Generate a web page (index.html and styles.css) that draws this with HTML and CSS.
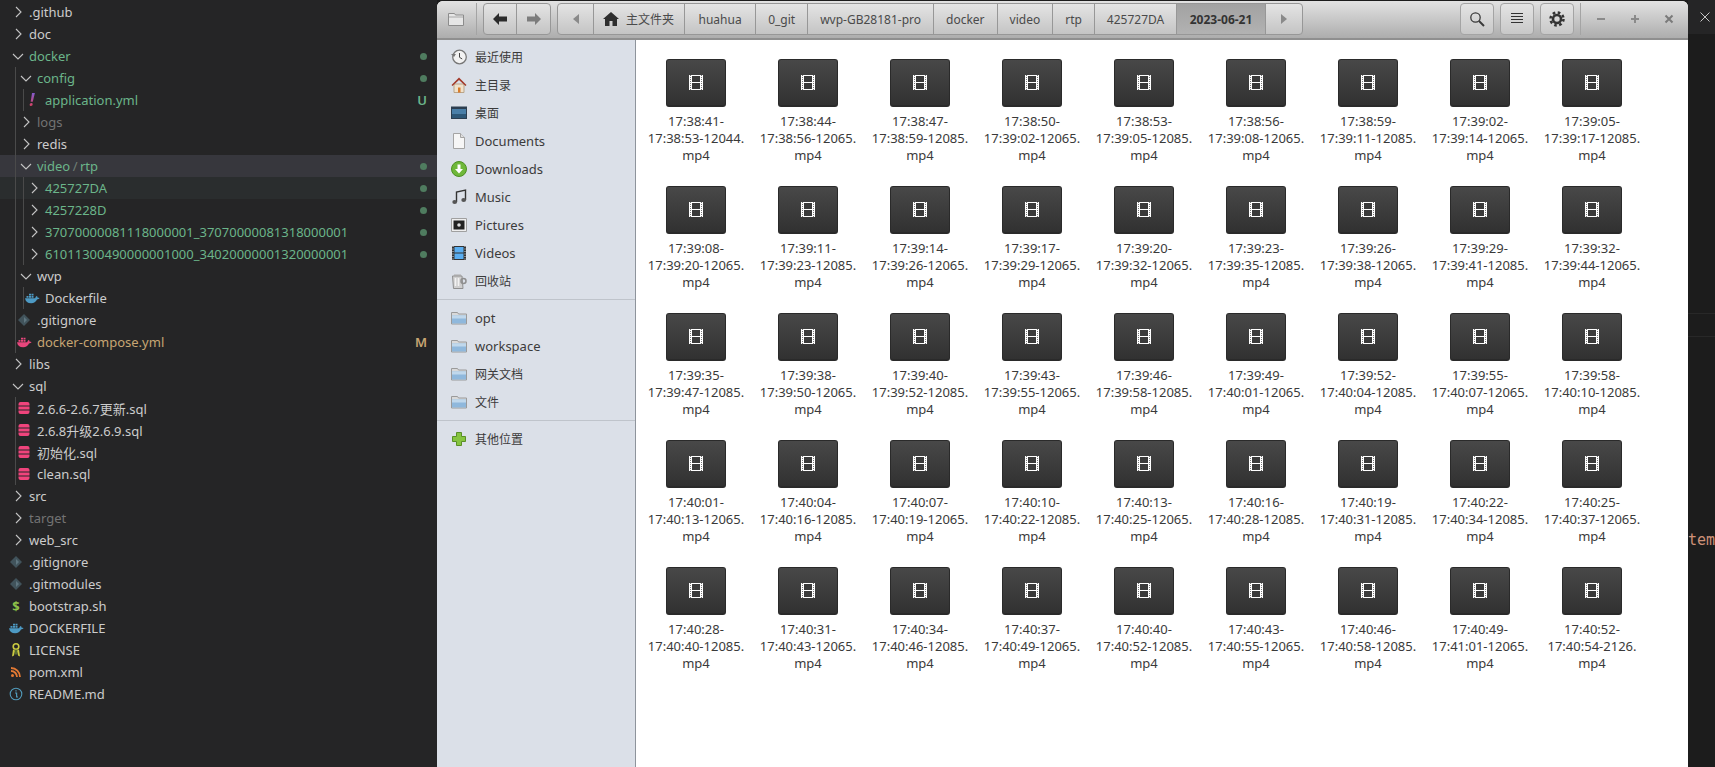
FILE: index.html
```html
<!DOCTYPE html>
<html>
    <head>
        <meta http-equiv="content-type" content="text/html;charset=utf-8">
        <title>文件管理器</title>
        <link rel="stylesheet" href="styles.css">
    </head>
    <body>
        <!-- 图标 -->
        <svg class="defs">
            <symbol id="right" viewBox="0 0 16 16"><path d="M6 3l5 5-5 5" fill="none" stroke="#c5c5c5" stroke-width="1.1"/></symbol>
            <symbol id="down" viewBox="0 0 16 16"><path d="M3 6l5 5 5-5" fill="none" stroke="#c5c5c5" stroke-width="1.1"/></symbol>
            <symbol id="whale" viewBox="0 0 16 16"><path d="M1 8.2h10.2c.2-1 .9-1.8 1.7-2.1.4.5.7 1 .8 1.6.5-.1 1.2 0 1.8.4-.5 1-1.5 1.4-2.5 1.4-1 2.4-3.2 3.7-5.8 3.7C3.600 13.200 1.600 11.400 1 8.200z"/><path d="M2.500 6h2v1.700h-2zM5 6h2v1.700H5zM7.500 6h2v1.700h-2zM5 3.800h2v1.700H5zM7.500 3.800h2v1.700h-2z"/></symbol>
            <symbol id="git" viewBox="0 0 16 16"><path d="M8 2l6 6-6 6-6-6z" fill="#41535b"/><path d="M8 5l3 3-3 3z" fill="#5f7680"/></symbol>
            <symbol id="db" viewBox="0 0 16 16"><path d="M4.500 2h7a2 2 0 0 1 2 2v1.500h-11V4a2 2 0 0 1 2-2zM2.500 6.500h11v3h-11zM2.500 10.500h11V12a2 2 0 0 1-2 2h-7a2 2 0 0 1-2-2z" fill="#f0447c"/></symbol>
            <symbol id="key" viewBox="0 0 16 16"><circle cx="8" cy="4.500" r="2.800" fill="none" stroke="#cbcb41" stroke-width="1.600"/><path d="M5 7.500l-1 7 2-1 1-5zM11 7.500l1 7-2-1-1-5z" fill="#cbcb41"/><path d="M7.300 7.500h1.400v5H7.300z" fill="#6d8f3a"/></symbol>
            <symbol id="rss" viewBox="0 0 16 16"><circle cx="4.500" cy="11.500" r="1.500" fill="#e37933"/><path d="M3 7a6 6 0 0 1 6 6M3 4a9 9 0 0 1 9 9" fill="none" stroke="#e37933" stroke-width="1.800"/></symbol>
            <symbol id="info" viewBox="0 0 16 16"><circle cx="8" cy="8" r="5.800" fill="none" stroke="#519aba" stroke-width="1.100"/><path d="M7 7h1.600v4H10M8 4.300v1.200" fill="none" stroke="#519aba" stroke-width="1.200"/></symbol>
            <symbol id="film" viewBox="0 0 14 15"><path d="M0 0h14v15H0z" fill="#fff"/><path d="M3 1h8v6H3zM3 8h8v6H3z" fill="#3a3a3a"/><path d="M1.500 0v15M12.500 0v15" stroke="#777" stroke-dasharray="1 1"/></symbol>
            <symbol id="folder" viewBox="0 0 16 16"><path d="M.5 2.500h6l1 1.500h8v10H.500z" fill="#d9d9d9" stroke="#9a9a9a"/><path d="M1 5.500h14V13.500H1z" fill="#8fb8dc"/><path d="M1 5.500h14v3H1z" fill="#c0d8ec"/></symbol>
        </svg>

        <!-- 左边文件树 -->
        <div class="explorer">
            <div class="row"><svg class="tw"><use href="#right"/></svg><span>.github</span></div>
            <div class="row"><svg class="tw"><use href="#right"/></svg><span>doc</span></div>
            <div class="row green"><svg class="tw"><use href="#down"/></svg><span>docker</span><b class="dot"></b></div>
            <div class="row green"><i class="guide"></i><svg class="tw"><use href="#down"/></svg><span>config</span><b class="dot"></b></div>
            <div class="row green"><i class="guide"></i><i class="guide"></i><span class="ico bang">!</span><span>application.yml</span><b class="mark">U</b></div>
            <div class="row faded"><i class="guide"></i><svg class="tw"><use href="#right"/></svg><span>logs</span></div>
            <div class="row"><i class="guide"></i><svg class="tw"><use href="#right"/></svg><span>redis</span></div>
            <div class="row green selected"><i class="guide"></i><svg class="tw"><use href="#down"/></svg><span>video<em class="slash">/</em>rtp</span><b class="dot"></b></div>
            <div class="row green hover"><i class="guide"></i><i class="guide"></i><svg class="tw"><use href="#right"/></svg><span>425727DA</span><b class="dot"></b></div>
            <div class="row green"><i class="guide"></i><i class="guide"></i><svg class="tw"><use href="#right"/></svg><span>4257228D</span><b class="dot"></b></div>
            <div class="row green"><i class="guide"></i><i class="guide"></i><svg class="tw"><use href="#right"/></svg><span>37070000081118000001_37070000081318000001</span><b class="dot"></b></div>
            <div class="row green"><i class="guide"></i><i class="guide"></i><svg class="tw"><use href="#right"/></svg><span>61011300490000001000_34020000001320000001</span><b class="dot"></b></div>
            <div class="row"><i class="guide"></i><svg class="tw"><use href="#down"/></svg><span>wvp</span></div>
            <div class="row"><i class="guide"></i><i class="guide"></i><svg class="ico blue"><use href="#whale"/></svg><span>Dockerfile</span></div>
            <div class="row"><i class="guide"></i><svg class="ico"><use href="#git"/></svg><span>.gitignore</span></div>
            <div class="row yellow"><i class="guide"></i><svg class="ico pink"><use href="#whale"/></svg><span>docker-compose.yml</span><b class="mark">M</b></div>
            <div class="row"><svg class="tw"><use href="#right"/></svg><span>libs</span></div>
            <div class="row"><svg class="tw"><use href="#down"/></svg><span>sql</span></div>
            <div class="row"><i class="guide"></i><svg class="ico"><use href="#db"/></svg><span>2.6.6-2.6.7更新.sql</span></div>
            <div class="row"><i class="guide"></i><svg class="ico"><use href="#db"/></svg><span>2.6.8升级2.6.9.sql</span></div>
            <div class="row"><i class="guide"></i><svg class="ico"><use href="#db"/></svg><span>初始化.sql</span></div>
            <div class="row"><i class="guide"></i><svg class="ico"><use href="#db"/></svg><span>clean.sql</span></div>
            <div class="row"><svg class="tw"><use href="#right"/></svg><span>src</span></div>
            <div class="row faded"><svg class="tw"><use href="#right"/></svg><span>target</span></div>
            <div class="row"><svg class="tw"><use href="#right"/></svg><span>web_src</span></div>
            <div class="row"><svg class="ico"><use href="#git"/></svg><span>.gitignore</span></div>
            <div class="row"><svg class="ico"><use href="#git"/></svg><span>.gitmodules</span></div>
            <div class="row"><span class="ico dollar">$</span><span>bootstrap.sh</span></div>
            <div class="row"><svg class="ico blue"><use href="#whale"/></svg><span>DOCKERFILE</span></div>
            <div class="row"><svg class="ico"><use href="#key"/></svg><span>LICENSE</span></div>
            <div class="row"><svg class="ico"><use href="#rss"/></svg><span>pom.xml</span></div>
            <div class="row"><svg class="ico"><use href="#info"/></svg><span>README.md</span></div>
        </div>

        <!-- 文件管理器窗口 -->
        <div class="window">
            <div class="titlebar">
                <svg class="tb-folder" viewBox="0 0 16 16"><path d="M.5 2.500h6l1 1.500h8v10.500H.500z" fill="#e6e6e6" stroke="#8c8c8c"/><path d="M1 6h14" stroke="#a8a8a8"/></svg>
                <i class="tb-sep"></i>
                <div class="btn-group">
                    <div class="crumb nav"><svg width="14" height="12" viewBox="0 0 14 12"><path d="M0 6l6-6v3.500h8v5H6V12z" fill="#2b2b2b"/></svg></div>
                    <div class="crumb nav"><svg width="14" height="12" viewBox="0 0 14 12"><path d="M14 6L8 0v3.500H0v5h8V12z" fill="#7c7c7c"/></svg></div>
                </div>
                <div class="btn-group path">
                    <div class="crumb arrow"><svg width="6" height="10" viewBox="0 0 6 10"><path d="M6 0v10L0 5z" fill="#8a8a8a"/></svg></div>
                    <div class="crumb home"><svg width="16" height="14" viewBox="0 0 16 14"><path d="M8 0l8 7h-2v7H9.500V9h-3v5H2V7H0z" fill="#2e2e2e"/></svg><span class="cjk">主文件夹</span></div>
                    <div class="crumb wide">huahua</div>
                    <div class="crumb">0_git</div>
                    <div class="crumb">wvp-GB28181-pro</div>
                    <div class="crumb">docker</div>
                    <div class="crumb">video</div>
                    <div class="crumb">rtp</div>
                    <div class="crumb">425727DA</div>
                    <div class="crumb active">2023-06-21</div>
                    <div class="crumb arrow end"><svg width="6" height="10" viewBox="0 0 6 10"><path d="M0 0v10l6-5z" fill="#8a8a8a"/></svg></div>
                </div>
                <div class="tb-right">
                    <div class="tool"><svg width="16" height="16" viewBox="0 0 16 16"><circle cx="6.500" cy="6.500" r="4.700" fill="none" stroke="#3a3a3a" stroke-width="1.300"/><path d="M10 10l5 5" stroke="#3a3a3a" stroke-width="2"/></svg></div>
                    <div class="tool"><svg width="14" height="12" viewBox="0 0 14 12"><path d="M1 .5h12M1 3.500h12M1 6.500h12M1 9.500h12" stroke="#333"/></svg></div>
                    <div class="tool"><svg width="16" height="16" viewBox="0 0 16 16"><circle cx="8" cy="8" r="4" fill="none" stroke="#333" stroke-width="2.600"/><circle cx="8" cy="8" r="6.500" fill="none" stroke="#333" stroke-width="2.500" stroke-dasharray="2.600 2.500"/></svg></div>
                    <i class="tb-sep wide"></i>
                    <div class="win-btn"><svg width="10" height="10" viewBox="0 0 10 10"><path d="M1 5h8" stroke="#8a8a8a" stroke-width="2"/></svg></div>
                    <div class="win-btn"><svg width="10" height="10" viewBox="0 0 10 10"><path d="M1 5h8M5 1v8" stroke="#8a8a8a" stroke-width="2"/></svg></div>
                    <div class="win-btn"><svg width="10" height="10" viewBox="0 0 10 10"><path d="M1.500 1.500l7 7M8.500 1.500l-7 7" stroke="#7a7a7a" stroke-width="2"/></svg></div>
                </div>
            </div>
            <div class="content">
                <div class="sidebar">
                    <div class="place"><svg viewBox="0 0 16 16"><circle cx="8.500" cy="8" r="6.800" fill="#f2f2f2" stroke="#777" stroke-width="1.300"/><path d="M8.500 4v4.300l2.700 1.700" fill="none" stroke="#444"/><path d="M0 5l3 3 2-3z" fill="#777"/></svg><span class="cjk">最近使用</span></div>
                    <div class="place"><svg viewBox="0 0 16 16"><path d="M3 7h10v8.500H3z" fill="#f0e2cc" stroke="#b9a58a"/><path d="M7 10.500h2.500v5H7z" fill="#d97b2a"/><path d="M8 .5L.5 8l1 1L8 3l6.500 6 1-1z" fill="#a33a2a"/></svg><span class="cjk">主目录</span></div>
                    <div class="place"><svg viewBox="0 0 16 16"><path d="M0 1.500h16v12.500H0z" fill="#2c3e50"/><path d="M1 4h14v9H1z" fill="#4a7fa8"/><path d="M1 9h14v4H1z" fill="#2e5878"/></svg><span class="cjk">桌面</span></div>
                    <div class="place"><svg viewBox="0 0 16 16"><path d="M2.500.5h7l4 4v11h-11z" fill="#f6f6f6" stroke="#a4a4a4"/><path d="M9.500.5v4h4" fill="#e0e0e0" stroke="#a4a4a4"/></svg><span>Documents</span></div>
                    <div class="place"><svg viewBox="0 0 16 16"><circle cx="8" cy="8" r="7.500" fill="#6fb83a" stroke="#4d8f22"/><path d="M6.500 3.500h3V8H12l-4 4.500L4 8h2.500z" fill="#fff"/></svg><span>Downloads</span></div>
                    <div class="place"><svg viewBox="0 0 16 16"><path d="M5.500 13V3l9-2v10" fill="none" stroke="#333" stroke-width="1.400"/><ellipse cx="3.700" cy="13" rx="2.400" ry="1.900" fill="#555"/><ellipse cx="12.700" cy="11" rx="2.400" ry="1.900" fill="#555"/></svg><span>Music</span></div>
                    <div class="place"><svg viewBox="0 0 16 16"><path d="M.5 1.500h15v13H.500z" fill="#eee" stroke="#a0a0a0"/><path d="M2.500 3.500h11v9h-11z" fill="#222"/><circle cx="8" cy="8" r="1.800" fill="#ddd"/></svg><span>Pictures</span></div>
                    <div class="place"><svg viewBox="0 0 16 16"><path d="M1 1h14v14H1z" fill="#333"/><path d="M3.500 2h9v5.500h-9zM3.500 8.500h9V14h-9z" fill="#5aaef0"/><path d="M2 1v14M14 1v14" stroke="#ddd" stroke-dasharray="1 1.500"/></svg><span>Videos</span></div>
                    <div class="place"><svg viewBox="0 0 16 16"><path d="M1.500 3h9.500l1 12.500H2.500z" fill="#cfcfcf" stroke="#8f8f8f"/><path d="M4.500 5v8M7.500 5v8" stroke="#f2f2f2" stroke-width="1.500"/><circle cx="12.500" cy="8" r="2.500" fill="none" stroke="#8f8f8f" stroke-width="1.500"/><path d="M3 1.500h7v1.500H3z" fill="#aaa"/></svg><span class="cjk">回收站</span></div>
                    <div class="side-sep"></div>
                    <div class="place"><svg><use href="#folder"/></svg><span>opt</span></div>
                    <div class="place"><svg><use href="#folder"/></svg><span>workspace</span></div>
                    <div class="place"><svg><use href="#folder"/></svg><span class="cjk">网关文档</span></div>
                    <div class="place"><svg><use href="#folder"/></svg><span class="cjk">文件</span></div>
                    <div class="side-sep"></div>
                    <div class="place"><svg viewBox="0 0 16 16"><path d="M5.500 1.500h5v4h4v5h-4v4h-5v-4h-4v-5h4z" fill="#86c440" stroke="#5a8f26"/></svg><span class="cjk">其他位置</span></div>
                </div>
                <div class="grid">
                    <div class="item"><div class="thumb"><svg><use href="#film"/></svg></div><p>17:38:41-<br>17:38:53-12044.<br>mp4</p></div>
                    <div class="item"><div class="thumb"><svg><use href="#film"/></svg></div><p>17:38:44-<br>17:38:56-12065.<br>mp4</p></div>
                    <div class="item"><div class="thumb"><svg><use href="#film"/></svg></div><p>17:38:47-<br>17:38:59-12085.<br>mp4</p></div>
                    <div class="item"><div class="thumb"><svg><use href="#film"/></svg></div><p>17:38:50-<br>17:39:02-12065.<br>mp4</p></div>
                    <div class="item"><div class="thumb"><svg><use href="#film"/></svg></div><p>17:38:53-<br>17:39:05-12085.<br>mp4</p></div>
                    <div class="item"><div class="thumb"><svg><use href="#film"/></svg></div><p>17:38:56-<br>17:39:08-12065.<br>mp4</p></div>
                    <div class="item"><div class="thumb"><svg><use href="#film"/></svg></div><p>17:38:59-<br>17:39:11-12085.<br>mp4</p></div>
                    <div class="item"><div class="thumb"><svg><use href="#film"/></svg></div><p>17:39:02-<br>17:39:14-12065.<br>mp4</p></div>
                    <div class="item"><div class="thumb"><svg><use href="#film"/></svg></div><p>17:39:05-<br>17:39:17-12085.<br>mp4</p></div>

                    <div class="item"><div class="thumb"><svg><use href="#film"/></svg></div><p>17:39:08-<br>17:39:20-12065.<br>mp4</p></div>
                    <div class="item"><div class="thumb"><svg><use href="#film"/></svg></div><p>17:39:11-<br>17:39:23-12085.<br>mp4</p></div>
                    <div class="item"><div class="thumb"><svg><use href="#film"/></svg></div><p>17:39:14-<br>17:39:26-12065.<br>mp4</p></div>
                    <div class="item"><div class="thumb"><svg><use href="#film"/></svg></div><p>17:39:17-<br>17:39:29-12065.<br>mp4</p></div>
                    <div class="item"><div class="thumb"><svg><use href="#film"/></svg></div><p>17:39:20-<br>17:39:32-12065.<br>mp4</p></div>
                    <div class="item"><div class="thumb"><svg><use href="#film"/></svg></div><p>17:39:23-<br>17:39:35-12085.<br>mp4</p></div>
                    <div class="item"><div class="thumb"><svg><use href="#film"/></svg></div><p>17:39:26-<br>17:39:38-12065.<br>mp4</p></div>
                    <div class="item"><div class="thumb"><svg><use href="#film"/></svg></div><p>17:39:29-<br>17:39:41-12085.<br>mp4</p></div>
                    <div class="item"><div class="thumb"><svg><use href="#film"/></svg></div><p>17:39:32-<br>17:39:44-12065.<br>mp4</p></div>

                    <div class="item"><div class="thumb"><svg><use href="#film"/></svg></div><p>17:39:35-<br>17:39:47-12085.<br>mp4</p></div>
                    <div class="item"><div class="thumb"><svg><use href="#film"/></svg></div><p>17:39:38-<br>17:39:50-12065.<br>mp4</p></div>
                    <div class="item"><div class="thumb"><svg><use href="#film"/></svg></div><p>17:39:40-<br>17:39:52-12085.<br>mp4</p></div>
                    <div class="item"><div class="thumb"><svg><use href="#film"/></svg></div><p>17:39:43-<br>17:39:55-12065.<br>mp4</p></div>
                    <div class="item"><div class="thumb"><svg><use href="#film"/></svg></div><p>17:39:46-<br>17:39:58-12085.<br>mp4</p></div>
                    <div class="item"><div class="thumb"><svg><use href="#film"/></svg></div><p>17:39:49-<br>17:40:01-12065.<br>mp4</p></div>
                    <div class="item"><div class="thumb"><svg><use href="#film"/></svg></div><p>17:39:52-<br>17:40:04-12085.<br>mp4</p></div>
                    <div class="item"><div class="thumb"><svg><use href="#film"/></svg></div><p>17:39:55-<br>17:40:07-12065.<br>mp4</p></div>
                    <div class="item"><div class="thumb"><svg><use href="#film"/></svg></div><p>17:39:58-<br>17:40:10-12085.<br>mp4</p></div>

                    <div class="item"><div class="thumb"><svg><use href="#film"/></svg></div><p>17:40:01-<br>17:40:13-12065.<br>mp4</p></div>
                    <div class="item"><div class="thumb"><svg><use href="#film"/></svg></div><p>17:40:04-<br>17:40:16-12085.<br>mp4</p></div>
                    <div class="item"><div class="thumb"><svg><use href="#film"/></svg></div><p>17:40:07-<br>17:40:19-12065.<br>mp4</p></div>
                    <div class="item"><div class="thumb"><svg><use href="#film"/></svg></div><p>17:40:10-<br>17:40:22-12085.<br>mp4</p></div>
                    <div class="item"><div class="thumb"><svg><use href="#film"/></svg></div><p>17:40:13-<br>17:40:25-12065.<br>mp4</p></div>
                    <div class="item"><div class="thumb"><svg><use href="#film"/></svg></div><p>17:40:16-<br>17:40:28-12085.<br>mp4</p></div>
                    <div class="item"><div class="thumb"><svg><use href="#film"/></svg></div><p>17:40:19-<br>17:40:31-12085.<br>mp4</p></div>
                    <div class="item"><div class="thumb"><svg><use href="#film"/></svg></div><p>17:40:22-<br>17:40:34-12085.<br>mp4</p></div>
                    <div class="item"><div class="thumb"><svg><use href="#film"/></svg></div><p>17:40:25-<br>17:40:37-12065.<br>mp4</p></div>

                    <div class="item"><div class="thumb"><svg><use href="#film"/></svg></div><p>17:40:28-<br>17:40:40-12085.<br>mp4</p></div>
                    <div class="item"><div class="thumb"><svg><use href="#film"/></svg></div><p>17:40:31-<br>17:40:43-12065.<br>mp4</p></div>
                    <div class="item"><div class="thumb"><svg><use href="#film"/></svg></div><p>17:40:34-<br>17:40:46-12085.<br>mp4</p></div>
                    <div class="item"><div class="thumb"><svg><use href="#film"/></svg></div><p>17:40:37-<br>17:40:49-12065.<br>mp4</p></div>
                    <div class="item"><div class="thumb"><svg><use href="#film"/></svg></div><p>17:40:40-<br>17:40:52-12085.<br>mp4</p></div>
                    <div class="item"><div class="thumb"><svg><use href="#film"/></svg></div><p>17:40:43-<br>17:40:55-12065.<br>mp4</p></div>
                    <div class="item"><div class="thumb"><svg><use href="#film"/></svg></div><p>17:40:46-<br>17:40:58-12085.<br>mp4</p></div>
                    <div class="item"><div class="thumb"><svg><use href="#film"/></svg></div><p>17:40:49-<br>17:41:01-12065.<br>mp4</p></div>
                    <div class="item"><div class="thumb"><svg><use href="#film"/></svg></div><p>17:40:52-<br>17:40:54-2126.<br>mp4</p></div>
                </div>
            </div>
        </div>

        <!-- 右边露出的编辑器 -->
        <div class="editor">
            <div class="tabs"><svg width="12" height="12" viewBox="0 0 12 12"><path d="M1.500 1.500l9 9M10.500 1.500l-9 9" stroke="#c5c5c5"/></svg></div>
            <div class="line-box"></div>
            <div class="code">tem</div>
        </div>
    </body>
</html>
```

FILE: styles.css
```css
* {
    box-sizing: border-box;
}
html {
    height: 767px;
    overflow: hidden;
}
body {
    margin: 0;
    display: flex;
    height: 767px;
    overflow: hidden;
    background-color: #1c1c1c;
    font-family: "Noto Sans", "Noto Sans CJK SC", sans-serif;
    font-size: 13px;
}
.defs {
    display: none;
}

/* 文件树 */
.explorer {
    width: 437px;
    flex: none;
    padding-top: 1px;
    background: #252526;
    color: #cccccc;
}
.row {
    height: 22px;
    display: flex;
    align-items: center;
    padding: 0 10px 0 8px;
    white-space: nowrap;
}
.row.green { color: #6bb58a; }
.row.yellow { color: #c7a673; }
.row.faded { color: #737373; }
.row.selected { background: #37373d; }
.row.hover { background: #2a2d2e; }
.guide {
    width: 8px;
    height: 100%;
    flex: none;
    border-right: 1px solid #4a4a4a;
}
.tw {
    width: 16px;
    height: 16px;
    flex: none;
    margin: 0 3px 0 2px;
}
.ico {
    width: 16px;
    height: 16px;
    flex: none;
    margin-right: 5px;
    text-align: center;
    line-height: 16px;
}
.blue { fill: #4d9ac4; }
.pink { fill: #e8467c; }
.bang {
    font-weight: bold;
    font-style: italic;
    font-size: 17px;
    background: linear-gradient(#7b5dd6, #e23d52);
    -webkit-background-clip: text;
    background-clip: text;
    color: transparent;
}
.dollar {
    font-weight: bold;
    color: #8dc149;
}
.slash {
    font-style: normal;
    padding: 0 2.5px;
    color: #6f7f76;
}
.dot {
    width: 7px;
    height: 7px;
    margin-left: auto;
    border-radius: 50%;
    background: #4f7c5f;
}
.mark {
    margin-left: auto;
    font-weight: 600;
}

/* 窗口 */
.window {
    width: 1251px;
    flex: none;
    margin-top: 1px;
    display: flex;
    flex-direction: column;
    border-radius: 6px 6px 0 0;
    overflow: hidden;
    background: #fff;
}
.titlebar {
    height: 39px;
    flex: none;
    display: flex;
    align-items: center;
    padding: 0 2px 1px 11px;
    border-bottom: 2px solid #8f8f8f;
    background: linear-gradient(#e2e2e2, #adadad);
    color: #4a4a4a;
}
.tb-folder {
    width: 16px;
    height: 16px;
    margin-right: 12px;
}
.tb-sep {
    width: 1px;
    height: 32px;
    margin-right: 6px;
    background: #a4a4a4;
}
.btn-group {
    height: 32px;
    display: flex;
    border: 1px solid #979797;
    border-radius: 4px;
    overflow: hidden;
    background: linear-gradient(#e4e4e4, #c4c4c4);
}
.path {
    margin-left: 6px;
    font-size: 12px;
}
.crumb {
    display: flex;
    align-items: center;
    justify-content: center;
    padding: 0 12px;
    border-right: 1px solid #979797;
}
.crumb:last-child {
    border-right: none;
}
.crumb.wide {
    padding: 0 13.5px;
}
.nav {
    width: 33px;
    padding: 0;
}
.arrow {
    width: 36px;
    padding: 0;
}
.home {
    gap: 7px;
    padding: 0 10px 0 9px;
}
.cjk {
    font-size: 12px;
}
.active {
    padding: 0 12.5px;
    font-weight: bold;
    background: linear-gradient(#a2a2a2, #b2b2b2);
    color: #333;
}
.tb-right {
    margin-left: auto;
    display: flex;
    align-items: center;
}
.tool {
    width: 34px;
    height: 32px;
    margin-right: 6px;
    display: flex;
    align-items: center;
    justify-content: center;
    border: 1px solid #a4a4a4;
    border-radius: 4px;
    background: linear-gradient(#e4e4e4, #c8c8c8);
}
.tb-sep.wide {
    margin: 0 3px 0 0;
}
.win-btn {
    width: 34px;
    display: flex;
    justify-content: center;
}
.content {
    flex: 1;
    display: flex;
    min-height: 0;
}

/* 侧边栏 */
.sidebar {
    width: 199px;
    flex: none;
    padding-top: 3px;
    border-right: 1px solid #8e949c;
    background: #dbe0e8;
    color: #3b3b3b;
}
.place {
    height: 28px;
    display: flex;
    align-items: center;
    gap: 8px;
    padding-left: 14px;
}
.place svg {
    width: 16px;
    height: 16px;
    flex: none;
}
.side-sep {
    height: 1px;
    margin: 4px 0;
    background: #bfc4cb;
}

/* 图标视图 */
.grid {
    flex: 1;
    display: grid;
    grid-template-columns: repeat(9, 112px);
    grid-auto-rows: min-content;
    row-gap: 22px;
    padding: 19px 0 0 4px;
    color: #3a3a3a;
}
.item {
    display: flex;
    flex-direction: column;
    align-items: center;
}
.thumb {
    width: 60px;
    height: 48px;
    display: flex;
    align-items: center;
    justify-content: center;
    border: 1px solid #2a2a2a;
    border-bottom-width: 2px;
    border-radius: 3px;
    background: linear-gradient(#484848, #313131);
}
.thumb svg {
    width: 14px;
    height: 15px;
}
.item p {
    margin: 6px 0 0;
    line-height: 17px;
    text-align: center;
    white-space: nowrap;
}

/* 编辑器 */
.editor {
    flex: 1;
    min-width: 0;
    overflow: hidden;
    background: #1c1c1c;
}
.tabs {
    height: 34px;
    display: flex;
    align-items: center;
    justify-content: flex-end;
    padding-right: 4px;
    background: #252526;
}
.line-box {
    height: 24px;
    margin-top: 279px;
    border-top: 1px solid #282828;
    border-bottom: 1px solid #282828;
}
.code {
    margin-top: 194px;
    font-family: "DejaVu Sans Mono", monospace;
    font-size: 15px;
    line-height: 19px;
    color: #ce9178;
}
```
